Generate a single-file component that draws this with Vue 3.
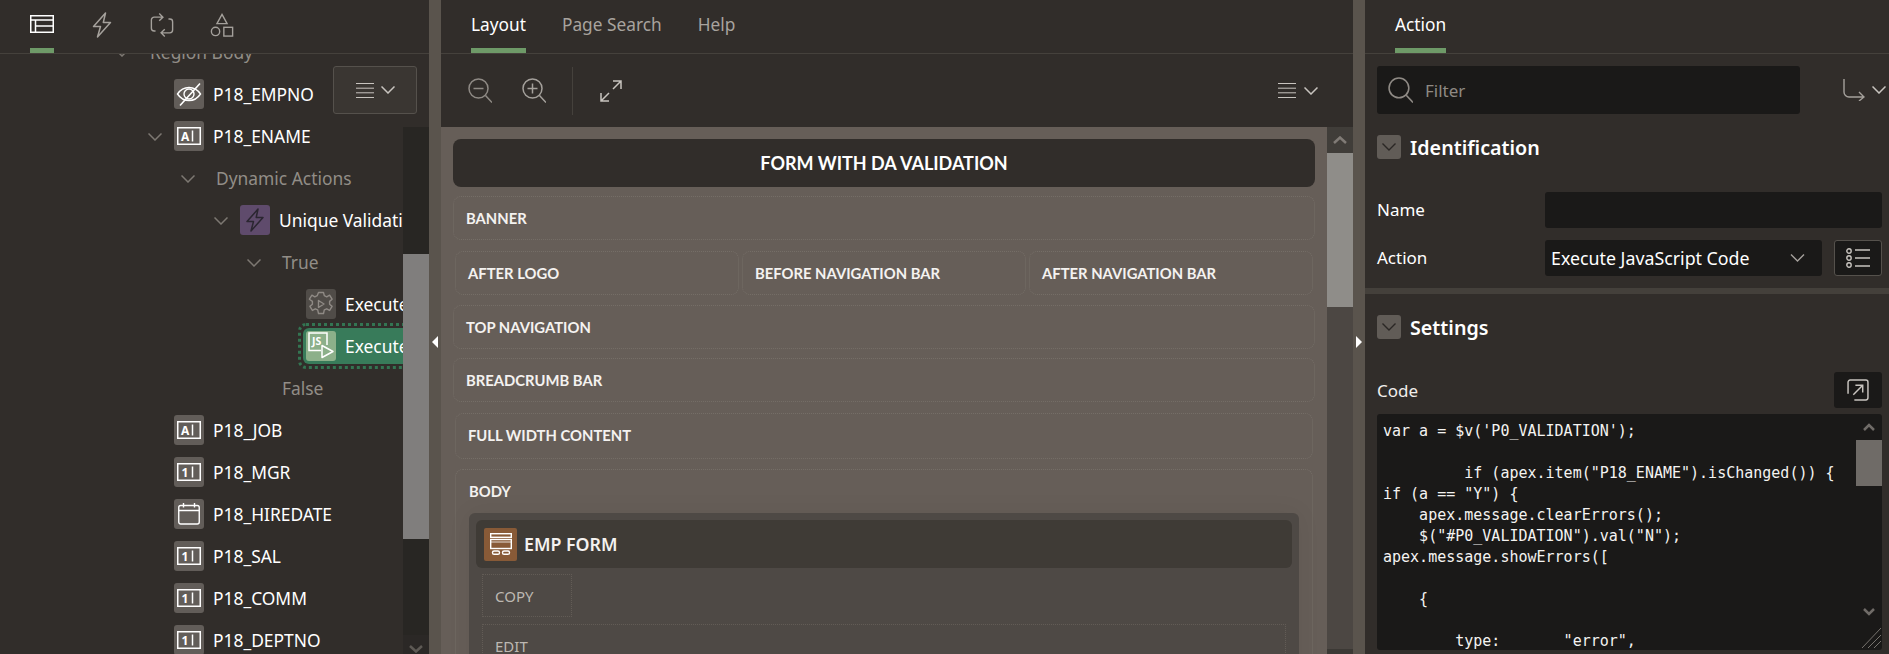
<script setup>
const rows = [
  { level: 0, chev: true, text: 'Region Body', muted: true },
  { level: 1, icon: 'hidden', text: 'P18_EMPNO' },
  { level: 1, chev: true, icon: 'text', text: 'P18_ENAME' },
  { level: 2, chev: true, text: 'Dynamic Actions', muted: true },
  { level: 3, chev: true, icon: 'bolt', text: 'Unique Validation' },
  { level: 4, chev: true, text: 'True', muted: true },
  { level: 5, icon: 'gear', text: 'Execute Server-side Code' },
  { level: 5, icon: 'js', text: 'Execute JavaScript Code', sel: true },
  { level: 4, text: 'False', muted: true },
  { level: 1, icon: 'text', text: 'P18_JOB' },
  { level: 1, icon: 'num', text: 'P18_MGR' },
  { level: 1, icon: 'cal', text: 'P18_HIREDATE' },
  { level: 1, icon: 'num', text: 'P18_SAL' },
  { level: 1, icon: 'num', text: 'P18_COMM' },
  { level: 1, icon: 'num', text: 'P18_DEPTNO' },
]
const indent = (l) => ({ paddingLeft: 115 + 33 * l + 'px' })
const code = `var a = $v('P0_VALIDATION');

         if (apex.item("P18_ENAME").isChanged()) {
if (a == "Y") {
    apex.message.clearErrors();
    $("#P0_VALIDATION").val("N");
apex.message.showErrors([

    {

        type:       "error",
        location:   "page",`
</script>

<template>
  <div class="app">
    <aside class="left">
      <nav class="tabs icon-tabs">
        <div class="itab on">
          <svg width="24" height="18" viewBox="0 0 24 18" fill="none" stroke="#fff" stroke-width="1.5"><rect x=".75" y=".75" width="22.5" height="16.5"/><path d="M.75 5h22.5M5.5 5v12.2M5.5 11h17.7"/></svg>
        </div>
        <div class="itab">
          <svg width="20" height="26" viewBox="0 0 20 26" fill="none" stroke="#a5a19c" stroke-width="1.5" stroke-linejoin="round"><path d="M13.5 1 1.5 14.5h7L5.5 25 18.5 10.5h-7.2z"/></svg>
        </div>
        <div class="itab">
          <svg width="26" height="26" viewBox="0 0 26 26" fill="none" stroke="#a5a19c" stroke-width="1.5"><path d="M14 4.500H4.500a3 3 0 0 0-3 3v9a3 3 0 0 0 3 3H6M10 .5l4 4-4 4M12 21.500h9.500a3 3 0 0 0 3-3v-9a3 3 0 0 0-3-3H20M16 17.500l-4 4 4 4"/></svg>
        </div>
        <div class="itab">
          <svg width="26" height="26" viewBox="0 0 26 26" fill="none" stroke="#a5a19c" stroke-width="1.5"><path d="M13 1.500 18.500 11.500h-11z"/><circle cx="6" cy="20" r="4.500"/><rect x="15" y="15.500" width="9.500" height="9.500"/></svg>
        </div>
      </nav>
      <div class="tree-wrap">
        <div class="tree">
          <div class="tree-inner">
            <div v-for="r in rows" :key="r.text" class="row" :class="{ sel: r.sel }" :style="indent(r.level)">
              <span class="slot">
                <svg v-if="r.chev" class="chev" width="14" height="8" viewBox="0 0 14 8" fill="none" stroke="#7d7872" stroke-width="1.5"><path d="M.5.500 7 7 13.500.500"/></svg>
              </span>
              <span v-if="r.icon" class="ico" :class="'ico-' + r.icon">
                <svg v-if="r.icon === 'hidden'" width="26" height="26" viewBox="0 0 26 26" fill="none" stroke="#fff" stroke-width="1.4"><path d="M1.500 13C4.500 8.500 8.500 6.500 13 6.500s8.500 2 11.500 6.500c-3 4.500-7 6.500-11.500 6.500S4.500 17.500 1.500 13z"/><circle cx="13" cy="13" r="5"/><path d="M4 24.500 24 2.500" stroke-width="1.600"/></svg>
                <svg v-else-if="r.icon === 'text'" width="24" height="18" viewBox="0 0 24 18" fill="none" stroke="#fff" stroke-width="1.500"><rect x=".75" y=".75" width="22.500" height="16.500"/><path d="M15.500 3.500v11"/><text x="4" y="14" fill="#fff" stroke="none" font-size="12" font-weight="700" font-family="Noto Sans, sans-serif">A</text></svg>
                <svg v-else-if="r.icon === 'num'" width="24" height="18" viewBox="0 0 24 18" fill="none" stroke="#fff" stroke-width="1.500"><rect x=".75" y=".75" width="22.500" height="16.500"/><path d="M15.500 3.500v11"/><text x="4.500" y="14" fill="#fff" stroke="none" font-size="12" font-weight="700" font-family="Noto Sans, sans-serif">1</text></svg>
                <svg v-else-if="r.icon === 'cal'" width="22" height="22" viewBox="0 0 22 22" fill="none" stroke="#fff" stroke-width="1.400"><rect x=".75" y="2.500" width="20.500" height="18.500" rx="2"/><path d="M.75 7.500h20.500M5.500 0v4.500M16.500 0v4.500"/></svg>
                <svg v-else-if="r.icon === 'bolt'" width="20" height="24" viewBox="0 0 20 24" fill="none" stroke="#2b2631" stroke-width="1.500" stroke-linejoin="round"><path d="M13 1 2 13.500h6.500L6 23 18 9.500h-6.800z"/></svg>
                <svg v-else-if="r.icon === 'gear'" width="26" height="26" viewBox="0 0 26 26" fill="none" stroke="#8f8a85" stroke-width="1.400" stroke-linejoin="round"><path d="M10.500 1.500h5l.8 3.200 2.400 1.100 2.900-1.600 2.500 4-2.500 2.200v2.800l2.500 2.200-2.500 4-2.900-1.600-2.400 1.100-.8 3.600h-5l-.8-3.600-2.400-1.100-2.900 1.600-2.500-4 2.500-2.200v-2.800L1.400 8.200l2.500-4 2.900 1.600 2.400-1.100z"/><path d="M10.500 9.500v7l5.500-3.500z"/></svg>
                <svg v-else-if="r.icon === 'js'" width="26" height="28" viewBox="0 0 26 28" fill="none" stroke="#fff" stroke-width="1.500"><path d="M13 18.500H1V1h18v12"/><path d="M14 13.500v12L25 19.500z" stroke-linejoin="round"/><text x="4" y="12.500" fill="#fff" stroke="none" font-size="10.500" font-weight="700" font-family="Noto Sans, sans-serif">JS</text></svg>
              </span>
              <span class="label" :class="{ muted: r.muted, plain: !r.icon }">{{ r.text }}</span>
            </div>
          </div>
        </div>
        <div class="vbar">
          <div class="vtrack t1"></div>
          <div class="vthumb"></div>
          <div class="vtrack t2"></div>
          <div class="vbtn">
            <svg width="14" height="8" viewBox="0 0 14 8" fill="none" stroke="#5e5a55" stroke-width="2.500"><path d="M1 1l6 5.500L13 1"/></svg>
          </div>
        </div>
        <div class="menu-btn">
          <svg width="18" height="15" viewBox="0 0 18 15" fill="none" stroke="#c8c4bf"><path d="M0 .5h18M0 5.200h18M0 9.800h18M0 14.500h18"/></svg>
          <svg width="14" height="8" viewBox="0 0 14 8" fill="none" stroke="#c8c4bf" stroke-width="1.500"><path d="M.5.500 7 7 13.500.500"/></svg>
        </div>
      </div>
    </aside>

    <div class="split"><i class="tri-l"></i></div>

    <main class="center">
      <nav class="tabs text-tabs">
        <div class="ttab on">Layout</div>
        <div class="ttab">Page Search</div>
        <div class="ttab">Help</div>
      </nav>
      <div class="toolbar">
        <svg class="zo" width="24" height="25" viewBox="0 0 24 25" fill="none" stroke="#8f8a85" stroke-width="1.500"><circle cx="10.500" cy="10.500" r="9.500"/><path d="M17.500 17.500 24 24.500M5.500 10.500h10"/></svg>
        <svg class="zi" width="24" height="25" viewBox="0 0 24 25" fill="none" stroke="#a5a19c" stroke-width="1.500"><circle cx="10.500" cy="10.500" r="9.500"/><path d="M17.500 17.500 24 24.500M5.500 10.500h10M10.500 5.500v10"/></svg>
        <span class="tdiv"></span>
        <svg class="exp" width="22" height="22" viewBox="0 0 22 22" fill="none" stroke="#c8c4bf" stroke-width="1.500"><path d="M1 21 9 13M13 9 21 1M13 1h8v8M1 13v8h8"/></svg>
        <span class="grow"></span>
        <svg class="m1" width="18" height="15" viewBox="0 0 18 15" fill="none" stroke="#c8c4bf"><path d="M0 .5h18M0 5.200h18M0 9.800h18M0 14.500h18"/></svg>
        <svg class="m2" width="14" height="8" viewBox="0 0 14 8" fill="none" stroke="#c8c4bf" stroke-width="1.500"><path d="M.5.500 7 7 13.500.500"/></svg>
      </div>
      <div class="canvas-wrap">
        <div class="canvas">
          <div class="page-title">FORM WITH DA VALIDATION</div>
          <div class="pos pos-banner">BANNER</div>
          <div class="pos-row">
            <div class="pos p3">AFTER LOGO</div>
            <div class="pos p3">BEFORE NAVIGATION BAR</div>
            <div class="pos p3">AFTER NAVIGATION BAR</div>
          </div>
          <div class="pos pos-top">TOP NAVIGATION</div>
          <div class="pos pos-crumb">BREADCRUMB BAR</div>
          <div class="pos pos-full">FULL WIDTH CONTENT</div>
          <div class="pos-body">
            <div class="body-label">BODY</div>
            <div class="region">
              <div class="region-head">
                <span class="region-ico">
                  <svg width="22" height="22" viewBox="0 0 22 22" fill="none" stroke="#fff" stroke-width="1.400"><rect x=".7" y=".7" width="20.600" height="3.600"/><rect x=".7" y="6.500" width="20.600" height="9"/><path d="M.7 9h20.600" stroke-width=".8"/><rect x="2.500" y="18" width="7" height="3.300" rx="1.600"/><rect x="12.500" y="18" width="7" height="3.300" rx="1.600"/></svg>
                </span>
                <span>EMP FORM</span>
              </div>
              <div class="slot-box copy">COPY</div>
              <div class="slot-box edit">EDIT</div>
            </div>
          </div>
        </div>
        <div class="cbar">
          <div class="cbtn">
            <svg width="14" height="8" viewBox="0 0 14 8" fill="none" stroke="#807b76" stroke-width="2.500"><path d="M1 7l6-5.500L13 7"/></svg>
          </div>
          <div class="cthumb"></div>
          <div class="ctrack"></div>
          <div class="cend"></div>
        </div>
      </div>
    </main>

    <div class="split"><i class="tri-r"></i></div>

    <aside class="right">
      <nav class="tabs text-tabs">
        <div class="ttab on">Action</div>
      </nav>
      <div class="filter-row">
        <div class="filter">
          <svg width="25" height="26" viewBox="0 0 24 25" fill="none" stroke="#8f8a85" stroke-width="1.500"><circle cx="10.500" cy="10.500" r="9.500"/><path d="M17.500 17.500 24 24.500"/></svg>
          <span>Filter</span>
        </div>
        <svg class="go" width="22" height="22" viewBox="0 0 22 22" fill="none" stroke="#a5a19c" stroke-width="1.400"><path d="M1 0v13a5 5 0 0 0 5 5h15M16 13l5 5-5 4"/></svg>
        <svg class="go2" width="14" height="8" viewBox="0 0 14 8" fill="none" stroke="#c8c4bf" stroke-width="1.500"><path d="M.5.500 7 7 13.500.500"/></svg>
      </div>

      <section class="group g1">
        <div class="ghead">
          <span class="gtoggle"><svg width="14" height="8" viewBox="0 0 14 8" fill="none" stroke="#2a2725" stroke-width="1.400"><path d="M.5.500 7 7 13.500.500"/></svg></span>
          <span>Identification</span>
        </div>
        <div class="field f-name">
          <label>Name</label>
          <div class="inp"></div>
        </div>
        <div class="field f-action">
          <label>Action</label>
          <div class="inp sel-inp">
            <span>Execute JavaScript Code</span>
            <svg width="15" height="8" viewBox="0 0 14 8" fill="none" stroke="#a5a19c" stroke-width="1.400"><path d="M.5.500 7 7 13.500.500"/></svg>
          </div>
          <div class="list-btn">
            <svg width="24" height="20" viewBox="0 0 24 20" fill="none" stroke="#c8c4bf" stroke-width="1.400"><circle cx="3" cy="3" r="2.200"/><circle cx="3" cy="10" r="2.200"/><circle cx="3" cy="17" r="2.200"/><path d="M9 2h15M9 10h15M9 18h15"/></svg>
          </div>
        </div>
      </section>
      <div class="gdiv"></div>
      <section class="group g2">
        <div class="ghead">
          <span class="gtoggle"><svg width="14" height="8" viewBox="0 0 14 8" fill="none" stroke="#2a2725" stroke-width="1.400"><path d="M.5.500 7 7 13.500.500"/></svg></span>
          <span>Settings</span>
        </div>
        <div class="code-head">
          <label>Code</label>
          <div class="ext-btn">
            <svg width="22" height="22" viewBox="0 0 21 21" fill="none" stroke="#c8c4bf" stroke-width="1.400"><path d="M1 14V3a2 2 0 0 1 2-2h15a2 2 0 0 1 2 2v15a2 2 0 0 1-2 2H7"/><path d="M6 15 15 6M8 6h7v7"/></svg>
          </div>
        </div>
        <div class="editor">
          <pre class="code">{{ code }}</pre>
          <div class="ebar">
            <div class="ebtn"><svg width="12" height="8" viewBox="0 0 12 8" fill="none" stroke="#6f6b67" stroke-width="2.500"><path d="M1 7l5-5 5 5"/></svg></div>
            <div class="ethumb"></div>
            <div class="grow"></div>
            <div class="ebtn e2"><svg width="12" height="8" viewBox="0 0 12 8" fill="none" stroke="#6f6b67" stroke-width="2.500"><path d="M1 1l5 5 5-5"/></svg></div>
            <svg class="grip" width="20" height="22" viewBox="0 0 20 22" fill="none" stroke="#77736e"><path d="M1 21 20 1M7 21 20 8M13 21l7-7"/></svg>
          </div>
        </div>
      </section>
    </aside>
  </div>
</template>

<style>
html, body { margin: 0; background: #312d2a; overflow: hidden; }
</style>

<style scoped>
.app { display: flex; width: 1889px; height: 654px; overflow: hidden; background: #312d2a; color: #fff; font-family: "Noto Sans", sans-serif; }
.left { width: 429px; display: flex; flex-direction: column; flex: none; }
.center { width: 912px; display: flex; flex-direction: column; flex: none; }
.right { width: 524px; flex: none; display: flex; flex-direction: column; }
.split { width: 12px; flex: none; background: #5a544d; padding-top: 336px; box-sizing: border-box; }
.split i { display: block; width: 0; height: 0; border-top: 6px solid transparent; border-bottom: 6px solid transparent; margin-left: 3px; }
.tri-l { border-right: 6px solid #fff; }
.tri-r { border-left: 6px solid #fff; }
.tabs { height: 54px; box-sizing: border-box; border-bottom: 1px solid #45413c; display: flex; flex: none; position: relative; z-index: 2; background: #312d2a; }
.icon-tabs { padding-left: 30px; gap: 36px; }
.itab { width: 24px; height: 53px; box-sizing: border-box; display: flex; justify-content: center; padding-top: 12px; }
.itab.on { border-bottom: 5px solid #6e9a68; padding-top: 15px; }
.tree-wrap { flex: 1; display: flex; position: relative; min-height: 0; }
.tree { width: 403px; flex: none; overflow: hidden; }
.tree-inner { margin-top: -23px; }
.row { height: 42px; box-sizing: border-box; display: flex; align-items: center; position: relative; font-size: 17.400px; white-space: nowrap; }
.row.sel::before { content: ""; position: absolute; left: 303px; right: -20px; top: 3px; bottom: 3px; background: #387b5a; border-radius: 6px; }
.row.sel::after { content: ""; position: absolute; left: 298px; right: -20px; top: -2px; bottom: -2px; border: 3px dotted #337552; border-radius: 8px; }
.slot { width: 26px; flex: none; display: flex; padding-top: 2px; position: relative; }
.ico { width: 30px; height: 30px; border-radius: 3px; background: #625d59; flex: none; display: flex; align-items: center; justify-content: center; margin-right: 9px; position: relative; z-index: 1; }
.ico-bolt { background: #5f4b6c; }
.ico-gear { background: #504c48; }
.ico-js { background: #8cb08a; }
.label { color: #fff; position: relative; z-index: 1; }
.label.plain { margin-left: 9px; }
.label.muted { color: #928d87; }
.vbar { width: 26px; flex: none; margin-top: 73px; display: flex; flex-direction: column; }
.vtrack { background: #282623; }
.t1 { height: 127px; }
.vthumb { height: 285px; background: #807e7d; }
.t2 { flex: 1; }
.vbtn { height: 19px; box-sizing: border-box; background: #2b2826; display: flex; justify-content: center; padding-top: 10px; overflow: hidden; }
.menu-btn { position: absolute; left: 333px; top: 12px; width: 84px; height: 48px; box-sizing: border-box; border: 1px solid #55514c; border-radius: 3px; background: #3a3632; display: flex; align-items: center; justify-content: center; gap: 7px; z-index: 3; }
.text-tabs { padding-left: 30px; gap: 36px; font-size: 17.300px; }
.ttab { height: 53px; box-sizing: border-box; line-height: 50px; color: #a8a39e; }
.ttab.on { color: #fff; border-bottom: 5px solid #6e9a68; }
.toolbar { height: 73px; flex: none; box-sizing: border-box; display: flex; align-items: center; padding-left: 27px; padding-right: 35px; }
.zi { margin-left: 30px; }
.tdiv { width: 1px; height: 48px; background: #45413c; margin-left: 26px; }
.exp { margin-left: 27px; }
.grow { flex: 1; }
.m2 { margin-left: 8px; }
.canvas-wrap { flex: 1; display: flex; min-height: 0; }
.canvas { width: 886px; flex: none; box-sizing: border-box; background: #665e58; padding: 12px 12px 0; overflow: hidden; font-family: Lato, sans-serif; font-weight: 700; font-size: 14.800px; color: #f4f2f0; }
.page-title { height: 48px; background: #312d2a; border-radius: 8px; display: flex; align-items: center; justify-content: center; font-size: 18px; color: #fff; font-weight: 700; }
.pos { border: 1px dotted #756e67; border-radius: 8px; box-sizing: border-box; display: flex; align-items: center; padding-left: 12px; }
.pos-banner { height: 44px; margin-top: 9px; }
.pos-row { display: flex; gap: 3px; margin: 11px 2px 0; }
.p3 { flex: 1; height: 44px; }
.pos-top { height: 44px; margin-top: 10px; }
.pos-crumb { height: 44px; margin-top: 9px; }
.pos-full { height: 46px; margin: 11px 2px 0; padding-bottom: 2px; }
.pos-body { border: 1px dotted #756e67; border-bottom: 0; border-radius: 8px 8px 0 0; box-sizing: border-box; margin: 10px 2px 0; padding: 0 13px; height: 200px; }
.body-label { height: 43px; box-sizing: border-box; display: flex; align-items: center; padding-bottom: 2px; }
.region { background: #4e4945; border-radius: 6px 6px 0 0; padding: 7px; height: 200px; box-shadow: 0 0 24px rgba(0,0,0,.06); }
.region-head { height: 48px; background: #3f3b36; border-radius: 6px; display: flex; align-items: center; padding-left: 8px; gap: 7px; font-family: "Noto Sans", sans-serif; font-weight: 600; font-size: 17.800px; color: #f4f2f0; }
.region-ico { width: 33px; height: 33px; border-radius: 2px; background: #885a37; display: flex; align-items: center; justify-content: center; }
.slot-box { border: 1px dotted #625c56; box-sizing: border-box; height: 43px; display: flex; align-items: center; padding-left: 12px; margin: 0 6px; color: #bdb8b2; font-weight: 400; font-family: "Noto Sans", sans-serif; font-size: 15px; }
.copy { width: 90px; margin-top: 6px; }
.edit { margin-top: 7px; }
.cbar { width: 26px; flex: none; background: #4c4743; display: flex; flex-direction: column; }
.cbtn { height: 26px; background: #403d39; display: flex; align-items: center; justify-content: center; }
.cthumb { height: 154px; background: #8f8d89; }
.ctrack { flex: 1; }
.cend { height: 5px; background: #3c3935; }
.filter-row { height: 72px; flex: none; box-sizing: border-box; padding: 12px 0 12px 12px; display: flex; align-items: center; }
.filter { width: 423px; height: 48px; box-sizing: border-box; background: #1a1918; border-radius: 3px; display: flex; align-items: center; padding-left: 11px; gap: 12px; color: #8e8983; font-size: 17px; }
.go { margin-left: 43px; }
.go2 { margin-left: 7px; }
.group { padding: 0 7px 0 12px; flex: none; }
.g1 { padding-top: 9px; height: 162px; box-sizing: border-box; }
.g2 { padding-top: 21px; flex: 1; min-height: 0; }
.gdiv { height: 6px; flex: none; background: #44403b; }
.ghead { display: flex; align-items: center; gap: 9px; font-size: 19.700px; font-weight: 600; height: 24px; }
.gtoggle { width: 24px; height: 24px; border-radius: 3px; background: #615c57; display: flex; align-items: center; justify-content: center; }
label { font-size: 17px; color: #fff; width: 168px; flex: none; margin-top: -2px; }
.field { display: flex; align-items: center; height: 36px; }
.f-name { margin-top: 33px; }
.f-action { margin-top: 12px; }
.inp { width: 337px; height: 36px; box-sizing: border-box; background: #1a1918; border-radius: 3px; }
.sel-inp { width: 277px; display: flex; align-items: center; justify-content: space-between; padding: 0 17px 0 6px; font-size: 17.800px; }
.list-btn { width: 48px; height: 36px; box-sizing: border-box; background: #1a1918; border: 1px solid #55514c; border-radius: 3px; margin-left: 12px; display: flex; align-items: center; justify-content: center; }
.code-head { display: flex; align-items: center; justify-content: space-between; margin-top: 33px; height: 36px; }
.code-head label { width: auto; color: #f0eeec; margin-top: 0; }
.ext-btn { width: 48px; height: 36px; background: #1a1918; border-radius: 3px; display: flex; align-items: center; justify-content: center; }
.editor { margin-top: 6px; height: 236px; background: #1a1918; border-radius: 3px; display: flex; overflow: hidden; position: relative; }
.code { flex: 1; margin: 0; padding: 7px 0 0 6px; font-family: "DejaVu Sans Mono", monospace; font-size: 15px; line-height: 21px; color: #f4f3f1; overflow: hidden; }
.ebar { width: 26px; flex: none; display: flex; flex-direction: column; position: relative; }
.ebtn { height: 26px; display: flex; align-items: center; justify-content: center; }
.ethumb { height: 46px; background: #6f6b67; }
.e2 { margin-bottom: 25px; }
.grip { position: absolute; right: 1px; bottom: 1px; }
</style>
